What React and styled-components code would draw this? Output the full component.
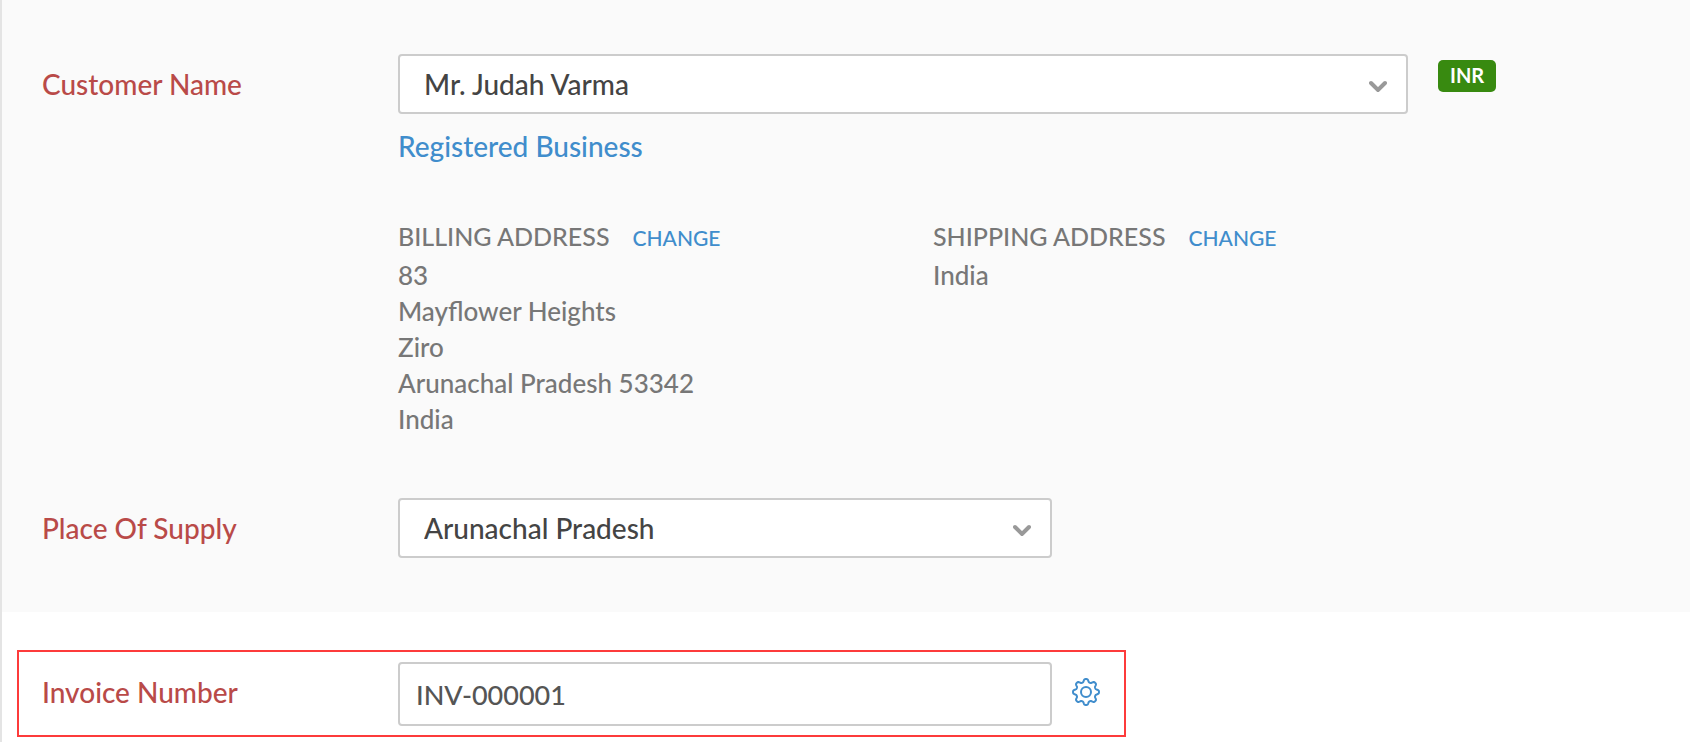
import React, { useState } from 'react';
import styled, { createGlobalStyle } from 'styled-components';

const customers = ['Mr. Judah Varma'];
const states = ['Arunachal Pradesh'];

const addresses = [
  {
    title: 'BILLING ADDRESS',
    lines: ['83', 'Mayflower Heights', 'Ziro', 'Arunachal Pradesh 53342', 'India'],
  },
  {
    title: 'SHIPPING ADDRESS',
    lines: ['India'],
  },
];

// outline of a gear with eight rounded teeth in a 28x28 box
const gearPoints = Array.from({ length: 160 }, (_, i) => {
  const angle = (i / 160) * Math.PI * 2;
  const radius = 11.5 + 1.6 * Math.tanh(1.6 * Math.cos(8 * angle));
  const x = 14 + radius * Math.cos(angle);
  const y = 14 + radius * Math.sin(angle);
  return `${x.toFixed(2)},${y.toFixed(2)}`;
}).join(' ');

function Dropdown({ id, options, value, onChange, maxWidth }) {
  return (
    <SelectWrapper $maxWidth={maxWidth}>
      <Select id={id} value={value} onChange={(e) => onChange(e.target.value)}>
        {options.map((option) => (
          <option key={option}>{option}</option>
        ))}
      </Select>
      <Chevron viewBox="0 0 18 16" aria-hidden="true">
        <path d="M2 7l7 7 7-7" />
      </Chevron>
    </SelectWrapper>
  );
}

function App() {
  const [customer, setCustomer] = useState(customers[0]);
  const [place, setPlace] = useState(states[0]);
  const [invoiceNumber, setInvoiceNumber] = useState('INV-000001');

  return (
    <Page>
      <GlobalStyle />
      <CustomerSection>
        <Row>
          <Label htmlFor="customer">Customer Name</Label>
          <div>
            <Controls $gap="30px">
              <Dropdown
                id="customer"
                options={customers}
                value={customer}
                onChange={setCustomer}
                maxWidth="1010px"
              />
              <Currency>INR</Currency>
            </Controls>
            <TaxLink href="#tax">Registered Business</TaxLink>
            <Addresses>
              {addresses.map((address) => (
                <div key={address.title}>
                  <AddressHeader>
                    <h4>{address.title}</h4>
                    <ChangeButton type="button">CHANGE</ChangeButton>
                  </AddressHeader>
                  <Address>
                    {address.lines.map((line) => (
                      <div key={line}>{line}</div>
                    ))}
                  </Address>
                </div>
              ))}
            </Addresses>
          </div>
        </Row>
        <Row>
          <Label htmlFor="place">Place Of Supply</Label>
          <Dropdown
            id="place"
            options={states}
            value={place}
            onChange={setPlace}
            maxWidth="654px"
          />
        </Row>
      </CustomerSection>
      <Highlight>
        <Row>
          <Label htmlFor="invoice">Invoice Number</Label>
          <Controls $gap="20px">
            <Input
              id="invoice"
              type="text"
              value={invoiceNumber}
              onChange={(e) => setInvoiceNumber(e.target.value)}
            />
            <IconButton type="button" aria-label="Configure invoice numbers">
              <GearIcon viewBox="0 0 28 28" aria-hidden="true">
                <polygon points={gearPoints} />
                <circle cx="14" cy="14" r="5" />
              </GearIcon>
            </IconButton>
          </Controls>
        </Row>
      </Highlight>
    </Page>
  );
}

const GlobalStyle = createGlobalStyle`
  * {
    box-sizing: border-box;
  }
  body {
    margin: 0;
    background: #fff;
  }
  body, button, input, select {
    font-family: Lato, 'Liberation Sans', sans-serif;
    font-weight: 500;
  }
`;

const Page = styled.main`
  min-height: 100vh;
  border-left: 2px solid #e4e4e4;
`;

const CustomerSection = styled.section`
  display: grid;
  gap: 61px;
  padding: 54px 40px;
  background: #fafafa;
`;

const Row = styled.div`
  display: grid;
  grid-template-columns: 356px minmax(0, 1fr);
  align-items: start;
`;

const Label = styled.label`
  color: #b94a48;
  font-size: 28px;
  line-height: 60px;
`;

const Controls = styled.div`
  display: flex;
  align-items: flex-start;
  gap: ${(props) => props.$gap};
`;

const SelectWrapper = styled.div`
  display: grid;
  align-items: center;
  width: 100%;
  max-width: ${(props) => props.$maxWidth};
`;

const Select = styled.select`
  grid-area: 1 / 1;
  width: 100%;
  height: 60px;
  padding: 0 60px 0 24px;
  appearance: none;
  border: 2px solid #ccc;
  border-radius: 4px;
  background: #fff;
  color: #444;
  font-size: 28px;
`;

const Chevron = styled.svg`
  grid-area: 1 / 1;
  justify-self: end;
  width: 18px;
  height: 16px;
  margin-right: 21px;
  pointer-events: none;
  fill: none;
  stroke: #999;
  stroke-width: 4;
  stroke-linecap: round;
`;

const Currency = styled.span`
  margin-top: 6px;
  padding: 0 12px 2px;
  border-radius: 5px;
  background: #388a10;
  color: #fff;
  font-size: 20px;
  font-weight: 700;
  line-height: 30px;
`;

const TaxLink = styled.a`
  display: inline-block;
  margin-top: 14px;
  color: #408dcc;
  font-size: 28px;
  line-height: 36px;
  text-decoration: none;
`;

const Addresses = styled.div`
  display: grid;
  grid-template-columns: minmax(0, 535px) minmax(0, 1fr);
  margin-top: 54px;
  color: #777;
`;

const AddressHeader = styled.div`
  display: flex;
  align-items: baseline;
  gap: 23px;
  margin-bottom: 3px;
  h4 {
    margin: 0;
    font-size: 25px;
    font-weight: 500;
    line-height: 36px;
  }
`;

const ChangeButton = styled.button`
  padding: 0;
  border: 0;
  background: none;
  color: #408dcc;
  font-size: 21px;
  cursor: pointer;
`;

const Address = styled.address`
  font-size: 26px;
  font-style: normal;
  line-height: 36px;
`;

const Highlight = styled.section`
  max-width: 1109px;
  margin: 38px 15px 0;
  padding: 10px 24px 9px 23px;
  border: 2px solid #fd3b3b;
`;

const Input = styled.input`
  flex: 1;
  min-width: 0;
  height: 64px;
  padding: 0 16px;
  border: 2px solid #ccc;
  border-radius: 4px;
  background: #fff;
  color: #555;
  font-size: 27px;
`;

const IconButton = styled.button`
  display: flex;
  align-items: center;
  height: 60px;
  padding: 0;
  border: 0;
  background: none;
  color: #408dcc;
  cursor: pointer;
`;

const GearIcon = styled.svg`
  width: 28px;
  height: 28px;
  fill: none;
  stroke: currentColor;
  stroke-width: 2;
  stroke-linejoin: round;
`;

export default App;
